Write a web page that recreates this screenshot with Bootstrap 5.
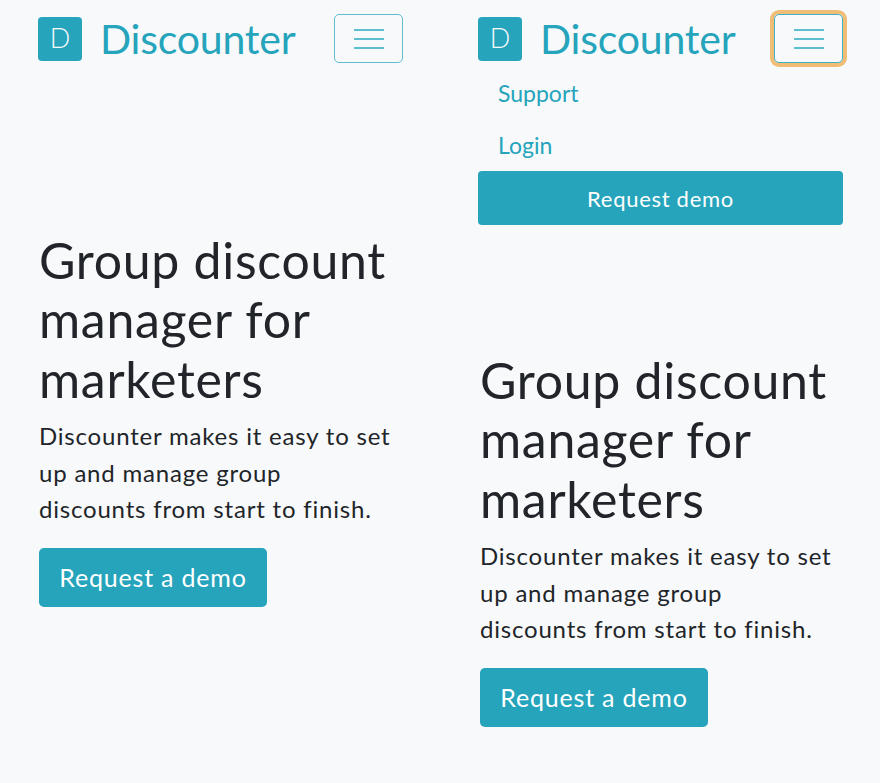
<!DOCTYPE html>
<html lang="en">
<head>
  <meta charset="UTF-8" />
  <meta name="viewport" content="width=device-width, initial-scale=1" />
  <title>Discounter</title>
  <link href="https://cdn.jsdelivr.net/npm/bootstrap@5.3.2/dist/css/bootstrap.min.css" rel="stylesheet" />
  <style>
    html, body {
      height: 100%;
      background: #f8f9fb;
      font-family: "Lato", "Liberation Sans", sans-serif;
      overflow: hidden;
    }
    .phone-panel { width: 440px; height: 783px; padding: 14px 37px 0 38px; }
    .phone-panel + .phone-panel { padding-left: 38px; padding-right: 37px; }
    .brand-row { height: 49px; }
    .brand-square {
      width: 44px; height: 44px; border-radius: 4px;
      background: #25a4bb; color: #f8f9fb; font-size: 27px; font-weight: 300;
    }
    .brand-name { color: #25a4bb; font-size: 41px; font-weight: 400; margin-left: 18px; line-height: 49px; letter-spacing: -.2px; }
    .menu-toggle {
      width: 69px; height: 49px; padding: 0;
      border: 1.5px solid #5fbdd0; border-radius: 5px; background: transparent;
    }
    .menu-toggle.is-focused { border-color: #3fb0c5; box-shadow: 0 0 0 4px #f0bd76; }
    .menu-toggle svg { display: block; margin: auto; }
    .menu-links { margin-top: 4px; }
    .menu-links a { display: block; color: #25a4bb; font-size: 23px; line-height: 52px; padding-left: 20px; text-decoration: none; }
    .wide-btn {
      background: #25a4bb; color: #fff; font-size: 22px; letter-spacing: .7px; height: 54px; border: 0; border-radius: 4px;
      width: 365px; display: block; padding: 0;
    }
    .hero-block { margin-left: 1px; color: #212529; }
    .hero-title { font-size: 50px; font-weight: 400; letter-spacing: .7px; line-height: 59.4px; margin: 0 0 9px; }
    .hero-text { max-width: 353px; font-size: 24px; letter-spacing: .8px; line-height: 36.4px; margin: 0 0 21px; }
    .demo-btn {
      background: #25a4bb; color: #fff; font-size: 25px; letter-spacing: .8px; border: 0; border-radius: 5px;
      width: 228px; height: 59px; padding: 0;
    }
    .hero-left { margin-top: 168px; }
    .hero-right { margin-top: 126px; margin-left: 2px; }
  </style>
</head>
<body>
  <div class="d-flex">
    <div class="phone-panel">
      <nav class="brand-row d-flex align-items-center justify-content-between">
        <div class="d-flex align-items-center">
          <span class="brand-square d-flex align-items-center justify-content-center">D</span>
          <span class="brand-name">Discounter</span>
        </div>
        <button class="menu-toggle" type="button" aria-label="Menu">
          <svg width="30" height="22" viewBox="0 0 30 22"><path d="M0 2h30M0 11h30M0 20h30" stroke="#5fbdd0" stroke-width="2" fill="none"/></svg>
        </button>
      </nav>
      <div class="hero-block hero-left">
        <h1 class="hero-title">Group discount manager for marketers</h1>
        <p class="hero-text">Discounter makes it easy to set up and manage group discounts from start to finish.</p>
        <button class="demo-btn" type="button">Request a demo</button>
      </div>
    </div>
    <div class="phone-panel">
      <nav class="brand-row d-flex align-items-center justify-content-between">
        <div class="d-flex align-items-center">
          <span class="brand-square d-flex align-items-center justify-content-center">D</span>
          <span class="brand-name">Discounter</span>
        </div>
        <button class="menu-toggle is-focused" type="button" aria-label="Menu">
          <svg width="30" height="22" viewBox="0 0 30 22"><path d="M0 2h30M0 11h30M0 20h30" stroke="#5fbdd0" stroke-width="2" fill="none"/></svg>
        </button>
      </nav>
      <div class="menu-links">
        <a href="#">Support</a>
        <a href="#">Login</a>
      </div>
      <button class="wide-btn" type="button">Request demo</button>
      <div class="hero-block hero-right">
        <h1 class="hero-title">Group discount manager for marketers</h1>
        <p class="hero-text">Discounter makes it easy to set up and manage group discounts from start to finish.</p>
        <button class="demo-btn" type="button">Request a demo</button>
      </div>
    </div>
  </div>
  <script src="https://cdn.jsdelivr.net/npm/bootstrap@5.3.2/dist/js/bootstrap.bundle.min.js"></script>
</body>
</html>
